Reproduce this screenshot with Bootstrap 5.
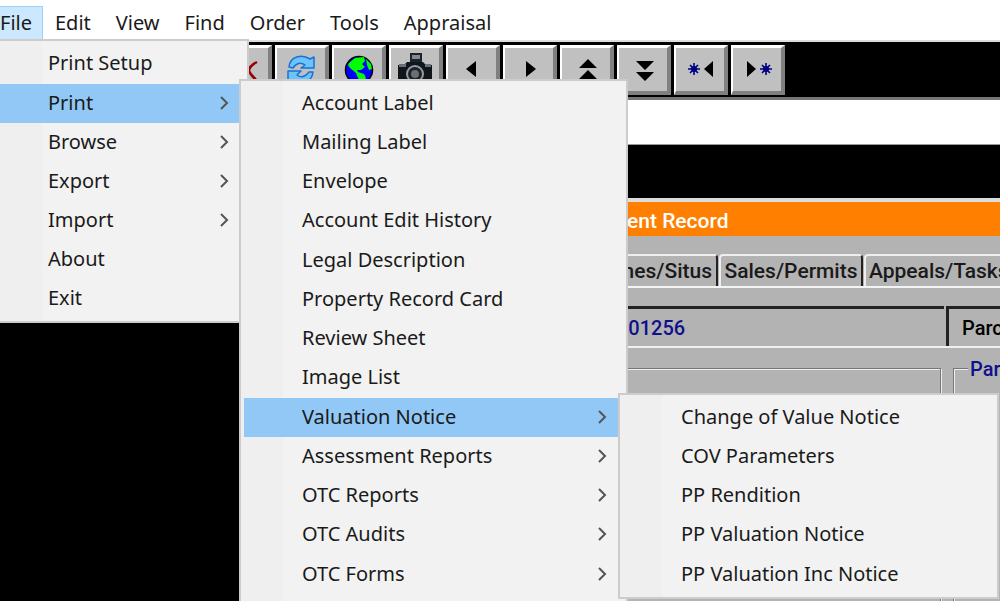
<!DOCTYPE html>
<html lang="en">
<head>
<meta charset="utf-8">
<meta name="viewport" content="width=device-width, initial-scale=1">
<title>Account Record</title>
<link href="https://cdn.jsdelivr.net/npm/bootstrap@5.3.0/dist/css/bootstrap.min.css" rel="stylesheet">
<style>
body{background:#000;height:100vh;font-family:"Noto Sans","Open Sans",sans-serif;font-size:20px;line-height:28px;color:#1a1a1a}
button{font:inherit;color:inherit;border:0;background:none;padding:0;white-space:nowrap}
/* menu bar */
.menubar{background:#fff;height:40px;padding-top:6px}
.bar-btn{height:34px;padding:0 12px 0 11px;border:1px solid transparent}
.bar-btn.open{background:#cce8ff;border:1px solid #99d1ff;border-left:0;padding-left:0;padding-right:10px}
/* drop-down menus */
.pop{position:absolute;z-index:10;background:linear-gradient(90deg,#efefef 42px,#f2f2f2 42px);border:2px solid #ccc;padding:3px;margin:0;list-style:none}
.pop-file{top:33px;left:-2px;width:251px;padding-left:0}
.pop-print{top:-5px;left:239px;width:389px;padding-bottom:16px}
.pop-notice{top:-5px;left:374px;width:381px}
.pop>li{position:relative;height:39px}
.pop>li:nth-child(4n){height:40px}
.pop-file>li:first-child{height:40px}
.pop-file>li:nth-child(4){height:39px}
.pop-btn{width:100%;height:39px;padding:0 8px 2px 58px;text-align:left;display:flex;align-items:center;justify-content:space-between}
.pop-file .pop-btn{padding-left:48px;padding-right:14px}
.pop-print .pop-btn{padding-left:58px;padding-right:15px}
.pop-btn.open{background:#91c8f6}
.pop-btn svg{width:10px;height:16px;fill:none;stroke:#555;stroke-width:2}
/* tool bar */
.toolbar{background:#000;height:60px;border-top:2px solid #ddd;border-bottom:3px solid #777;padding:3px 0 0 218px;gap:3px}
.tool{width:54px;height:50px;flex:none;background:#c0c0c0;border:2px solid;border-color:#fff #808080 #808080 #fff;border-top-width:3px;border-right-width:4px;border-bottom-width:4px;display:flex;align-items:center;justify-content:center}
.tool svg{width:46px;height:42px;display:block}
/* record window */
.strip-white{background:#fff;height:45px;border-bottom:1px solid #999}
.strip-black{height:53px}
.record{margin-left:616px;background:#b3b3b3;font-family:Roboto,sans-serif;font-weight:500;border-top:4px solid #ddd;white-space:nowrap}
.record-title{background:#ff8000;color:#fff;height:34px;line-height:38px;font-size:21px;margin:0;font-weight:500;padding-left:11px}
.tabs{padding-top:18px;border-bottom:2px solid #f4f4f4;font-size:21px}
.tab-btn{height:32px;border-top:2px solid #eee;border-left:2px solid #eee;border-right:2px solid #222;border-radius:4px 4px 0 0;padding:0 3px;margin-right:1px;flex:none}
.tab-btn.first{width:102px;text-align:right;padding-right:4px}
.tab-btn.second{width:144px}
.fields{margin-top:18px;height:42px;line-height:38px;border-bottom:2px solid #f0f0f0}
.field-a{width:328px;border-top:3px solid #222;color:#10108c;margin-right:2px;padding-left:1px;flex:none}
.field-b{border-top:3px solid #222;border-left:3px solid #222;padding-left:13px}
.groups{padding-top:20px}
.group{border:1px solid #777;box-shadow:inset 1px 1px #eee,1px 1px #eee}
.group-a{width:325px;margin-right:12px;flex:none}
.group-b{border-right:0;padding-left:14px}
.group-b span{position:relative;top:-14px;background:#b3b3b3;color:#10108c;padding:0 2px}
</style>
</head>
<body class="d-flex flex-column overflow-hidden">
<nav class="menubar d-flex flex-shrink-0" aria-label="Main menu">
  <div class="position-relative">
    <button class="bar-btn open">File</button>
    <ul class="pop pop-file">
      <li><button class="pop-btn">Print Setup</button></li>
      <li><button class="pop-btn open">Print<svg viewBox="0 0 10 16"><path d="M1 2l6 6-6 6"/></svg></button>
        <ul class="pop pop-print">
          <li><button class="pop-btn">Account Label</button></li>
          <li><button class="pop-btn">Mailing Label</button></li>
          <li><button class="pop-btn">Envelope</button></li>
          <li><button class="pop-btn">Account Edit History</button></li>
          <li><button class="pop-btn">Legal Description</button></li>
          <li><button class="pop-btn">Property Record Card</button></li>
          <li><button class="pop-btn">Review Sheet</button></li>
          <li><button class="pop-btn">Image List</button></li>
          <li><button class="pop-btn open">Valuation Notice<svg viewBox="0 0 10 16"><path d="M1 2l6 6-6 6"/></svg></button>
            <ul class="pop pop-notice">
              <li><button class="pop-btn">Change of Value Notice</button></li>
              <li><button class="pop-btn">COV Parameters</button></li>
              <li><button class="pop-btn">PP Rendition</button></li>
              <li><button class="pop-btn">PP Valuation Notice</button></li>
              <li><button class="pop-btn">PP Valuation Inc Notice</button></li>
            </ul>
          </li>
          <li><button class="pop-btn">Assessment Reports<svg viewBox="0 0 10 16"><path d="M1 2l6 6-6 6"/></svg></button></li>
          <li><button class="pop-btn">OTC Reports<svg viewBox="0 0 10 16"><path d="M1 2l6 6-6 6"/></svg></button></li>
          <li><button class="pop-btn">OTC Audits<svg viewBox="0 0 10 16"><path d="M1 2l6 6-6 6"/></svg></button></li>
          <li><button class="pop-btn">OTC Forms<svg viewBox="0 0 10 16"><path d="M1 2l6 6-6 6"/></svg></button></li>
        </ul>
      </li>
      <li><button class="pop-btn">Browse<svg viewBox="0 0 10 16"><path d="M1 2l6 6-6 6"/></svg></button></li>
      <li><button class="pop-btn">Export<svg viewBox="0 0 10 16"><path d="M1 2l6 6-6 6"/></svg></button></li>
      <li><button class="pop-btn">Import<svg viewBox="0 0 10 16"><path d="M1 2l6 6-6 6"/></svg></button></li>
      <li><button class="pop-btn">About</button></li>
      <li><button class="pop-btn">Exit</button></li>
    </ul>
  </div>
  <button class="bar-btn">Edit</button>
  <button class="bar-btn">View</button>
  <button class="bar-btn">Find</button>
  <button class="bar-btn">Order</button>
  <button class="bar-btn">Tools</button>
  <button class="bar-btn">Appraisal</button>
</nav>

<div class="toolbar d-flex flex-shrink-0" role="toolbar" aria-label="Record tools">
  <button class="tool" aria-label="Delete"><svg viewBox="1 1 46 42"><path d="M16 14q10 5 20 18M37 14q-8 4-8 9 1 3 8 10" fill="none" stroke="#900" stroke-width="2.5"/></svg></button>
  <button class="tool" aria-label="Refresh"><svg viewBox="1 1 46 42"><g fill="#6cc4fa" stroke="#1671d8" stroke-width="1.5" stroke-linejoin="round"><path d="M12 19C13 8 25 6 33 11l4-2v11H24l4-3c-4-3-9-2-12 3z"/><path d="M36 24c-1 10-12 14-20 9l-5 4V23h13l-4 4c4 3 8 2 12-3z"/></g></svg></button>
  <button class="tool" aria-label="Map"><svg viewBox="1 1 46 42"><circle cx="25" cy="22" r="13.5" fill="#00f" stroke="#000" stroke-width="1.5"/><path d="M15 15l6-5 9-1 1 4-3 3 3 3-4 3h-4l1 2 6 2 2 4-4 5-4-5-2-5-6-5-2-3zM32 11l5 5 1 5-3 1-2-5z" fill="#0f0"/></svg></button>
  <button class="tool" aria-label="Photo"><svg viewBox="1 1 46 42"><path d="M19 5h12v9H19z" fill="#1c232a"/><path d="M21 7h8v4h-8z" fill="#7f8c97"/><path d="M7 17h6l3-3h16l3 3h6v20H7z" fill="#11161b"/><path d="M8 16h7v3H8zM34 16h6v3h-6z" fill="#66717b"/><circle cx="24" cy="26" r="8" fill="#222" stroke="#929ba4" stroke-width="2"/><circle cx="24" cy="26" r="4" fill="#65707a"/></svg></button>
  <button class="tool" aria-label="Previous"><svg viewBox="1 1 46 42"><path d="M28 13v16l-10-8z"/></svg></button>
  <button class="tool" aria-label="Next"><svg viewBox="1 1 46 42"><path d="M21 13v16l10-8z"/></svg></button>
  <button class="tool" aria-label="Page up"><svg viewBox="1 1 46 42"><path d="M26 11l9 9H17zM26 22l9 9H17z"/></svg></button>
  <button class="tool" aria-label="Page down"><svg viewBox="1 1 46 42"><path d="M26 22l9-9H17zM26 33l9-9H17z"/></svg></button>
  <button class="tool" aria-label="First record"><svg viewBox="1 1 46 42"><path d="M37 13v16l-9-8z"/><path d="M18 15v12M12 21h12M14 17l8 8M22 17l-8 8" stroke="#000080" stroke-width="1.6"/><circle cx="18" cy="21" r="3" fill="#000080"/></svg></button>
  <button class="tool" aria-label="Last record"><svg viewBox="1 1 46 42"><path d="M14 13v16l9-8z"/><path d="M33 15v12M27 21h12M29 17l8 8M37 17l-8 8" stroke="#000080" stroke-width="1.6"/><circle cx="33" cy="21" r="3" fill="#000080"/></svg></button>
</div>
<div class="strip-white flex-shrink-0"></div>
<div class="strip-black flex-shrink-0"></div>

<main class="record flex-grow-1 overflow-hidden">
  <h1 class="record-title">ent Record</h1>
  <div class="tabs d-flex">
    <button class="tab-btn first">nes/Situs</button>
    <button class="tab-btn second">Sales/Permits</button>
    <button class="tab-btn">Appeals/Tasks</button>
  </div>
  <div class="fields d-flex">
    <div class="field-a">001256</div>
    <div class="field-b text-black flex-grow-1">Parcel</div>
  </div>
  <div class="groups d-flex h-100">
    <div class="group group-a"></div>
    <div class="group group-b flex-grow-1"><span>Parcel</span></div>
  </div>
</main>
<script src="https://cdn.jsdelivr.net/npm/bootstrap@5.3.0/dist/js/bootstrap.bundle.min.js"></script>
</body>
</html>
